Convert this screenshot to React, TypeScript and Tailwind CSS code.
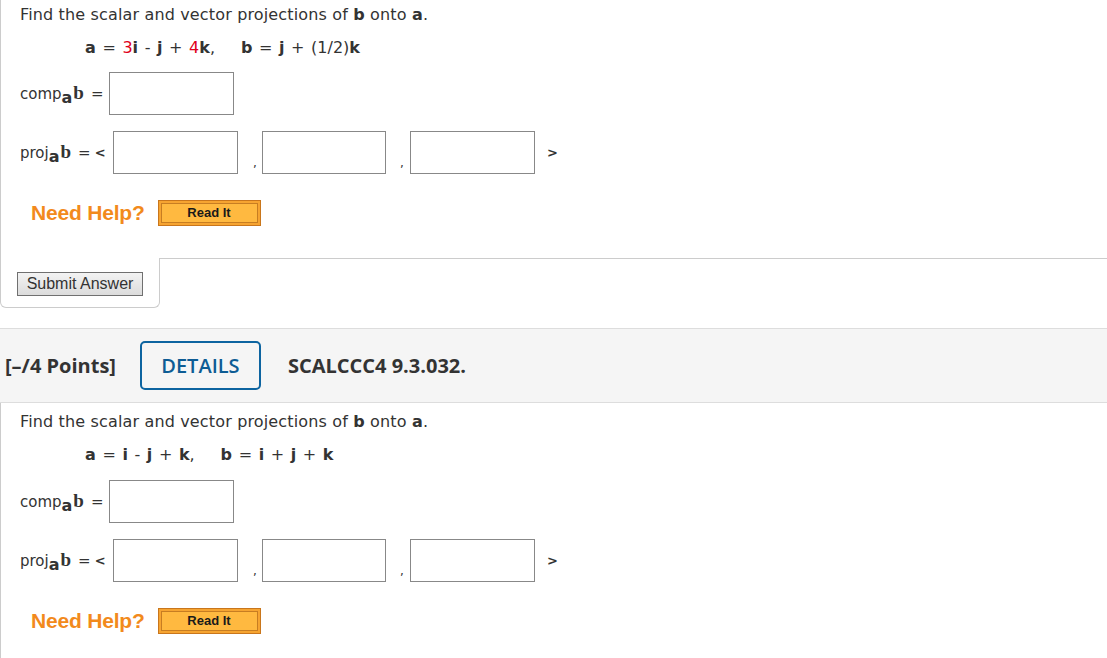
import React from "react";

const body = "font-['DejaVu_Sans',Verdana,sans-serif]";
const sans = "font-['Open_Sans',sans-serif]";
const arial = "font-['Liberation_Sans',Arial,sans-serif]";

function Box({ w = "w-[125px]" }: { w?: string }) {
  return <div className={`${w} h-[43px] border border-[#888] bg-white shrink-0`} />;
}

function SubB({ base }: { base: string }) {
  return (
    <span className="inline-flex items-baseline tracking-normal">
      <span>{base}</span>
      <span className="font-bold text-[16px] relative top-[4px]">a</span>
      <span className="font-['Liberation_Serif',serif] font-bold text-[19px] ml-[1px]">b</span>
      <span className="ml-[7px]">=</span>
    </span>
  );
}

function Equation({ first }: { first: boolean }) {
  if (first) {
    return (
      <div className="ml-[65px] h-[22px] leading-[22px] whitespace-pre tracking-normal [word-spacing:1.5px]">
        <b>a</b> = <span className="text-[#e0001b]">3</span>
        <b>i</b> - <b>j</b> + <span className="text-[#e0001b]">4</span>
        <b>k</b>,<span className="inline-block w-[26px]" />
        <b>b</b> = <b>j</b> + (1/2)<b>k</b>
      </div>
    );
  }
  return (
    <div className="ml-[65px] h-[22px] leading-[22px] whitespace-pre tracking-normal [word-spacing:1.5px]">
      <b>a</b> = <b>i</b> - <b>j</b> + <b>k</b>,<span className="inline-block w-[26px]" />
      <b>b</b> = <b>i</b> + <b>j</b> + <b>k</b>
    </div>
  );
}

function Question({ first }: { first: boolean }) {
  return (
    <div className={`pl-[19px] text-[16px] text-[#333] ${body}`}>
      <div className="h-[22px] leading-[22px] tracking-[0.15px]">
        Find the scalar and vector projections of <b>b</b> onto <b>a</b>.
      </div>
      <div className="mt-[11px]">
        <Equation first={first} />
      </div>
      <div className={`flex items-center h-[43px] ${first ? "mt-[13px]" : "mt-[14px]"}`}>
        <div className="w-[89px] text-[15px]">
          <SubB base="comp" />
        </div>
        <Box />
      </div>
      <div className="flex items-center h-[43px] mt-[16px]">
        <div className="w-[93px] flex items-center text-[15px]">
          <SubB base="proj" />
          <span className="ml-[4px] text-[13px] font-bold">&lt;</span>
        </div>
        <Box />
        <span className="w-[24px] self-end pb-[2px] pl-[15px] text-[12px]">,</span>
        <Box w="w-[124px]" />
        <span className="w-[24px] self-end pb-[2px] pl-[14px] text-[12px]">,</span>
        <Box />
        <span className="ml-[12px] text-[13px] font-bold">&gt;</span>
      </div>
      <div className="flex items-center h-[26px] mt-[26px] pl-[11px]">
        <span className={`${arial} font-bold text-[21px] text-[#f28a1c] tracking-[-0.2px]`}>
          Need Help?
        </span>
        <div className="ml-[13px] w-[103px] h-[26px] border border-[#c9761c] bg-[#f6a431] p-[2px]">
          <div
            className={`h-full border border-[#c77d22] bg-[#ffb940] flex items-center justify-center ${arial} font-bold text-[13px] text-[#1a1a1a]`}
          >
            Read It
          </div>
        </div>
      </div>
    </div>
  );
}

export default function App() {
  return (
    <div className="w-[1107px] h-[658px] overflow-hidden bg-white">
      {/* first question */}
      <div className="border-l border-b border-[#ccc] pt-[4px] h-[259px]">
        <Question first />
      </div>
      <div className="-mt-px w-[160px] h-[50px] border-x border-b border-[#ccc] rounded-b-[6px] bg-white pl-[16px] pt-[13px]">
        <button
          className={`w-[126px] h-[24px] border border-[#707070] bg-gradient-to-b from-[#f3f3f3] to-[#dcdcdc] ${arial} text-[16px] text-[#333] leading-[22px]`}
        >
          Submit Answer
        </button>
      </div>

      {/* header of second question */}
      <div className={`mt-[20px] h-[75px] bg-[#f5f5f5] border-y border-[#ddd] flex items-center pl-[5px] ${sans} text-[20px]`}>
        <span className="font-bold text-[#333]">[–/4 Points]</span>
        <div className="ml-[24px] w-[121px] h-[49px] border-2 border-[#0d64a0] rounded-[5px] flex items-center justify-center text-[#0d5c94] font-semibold">
          DETAILS
        </div>
        <span className="ml-[27px] font-bold text-[#333]">SCALCCC4 9.3.032.</span>
      </div>

      {/* second question */}
      <div className="border-l border-[#ccc] pt-[8px] h-[300px]">
        <Question first={false} />
      </div>
    </div>
  );
}
